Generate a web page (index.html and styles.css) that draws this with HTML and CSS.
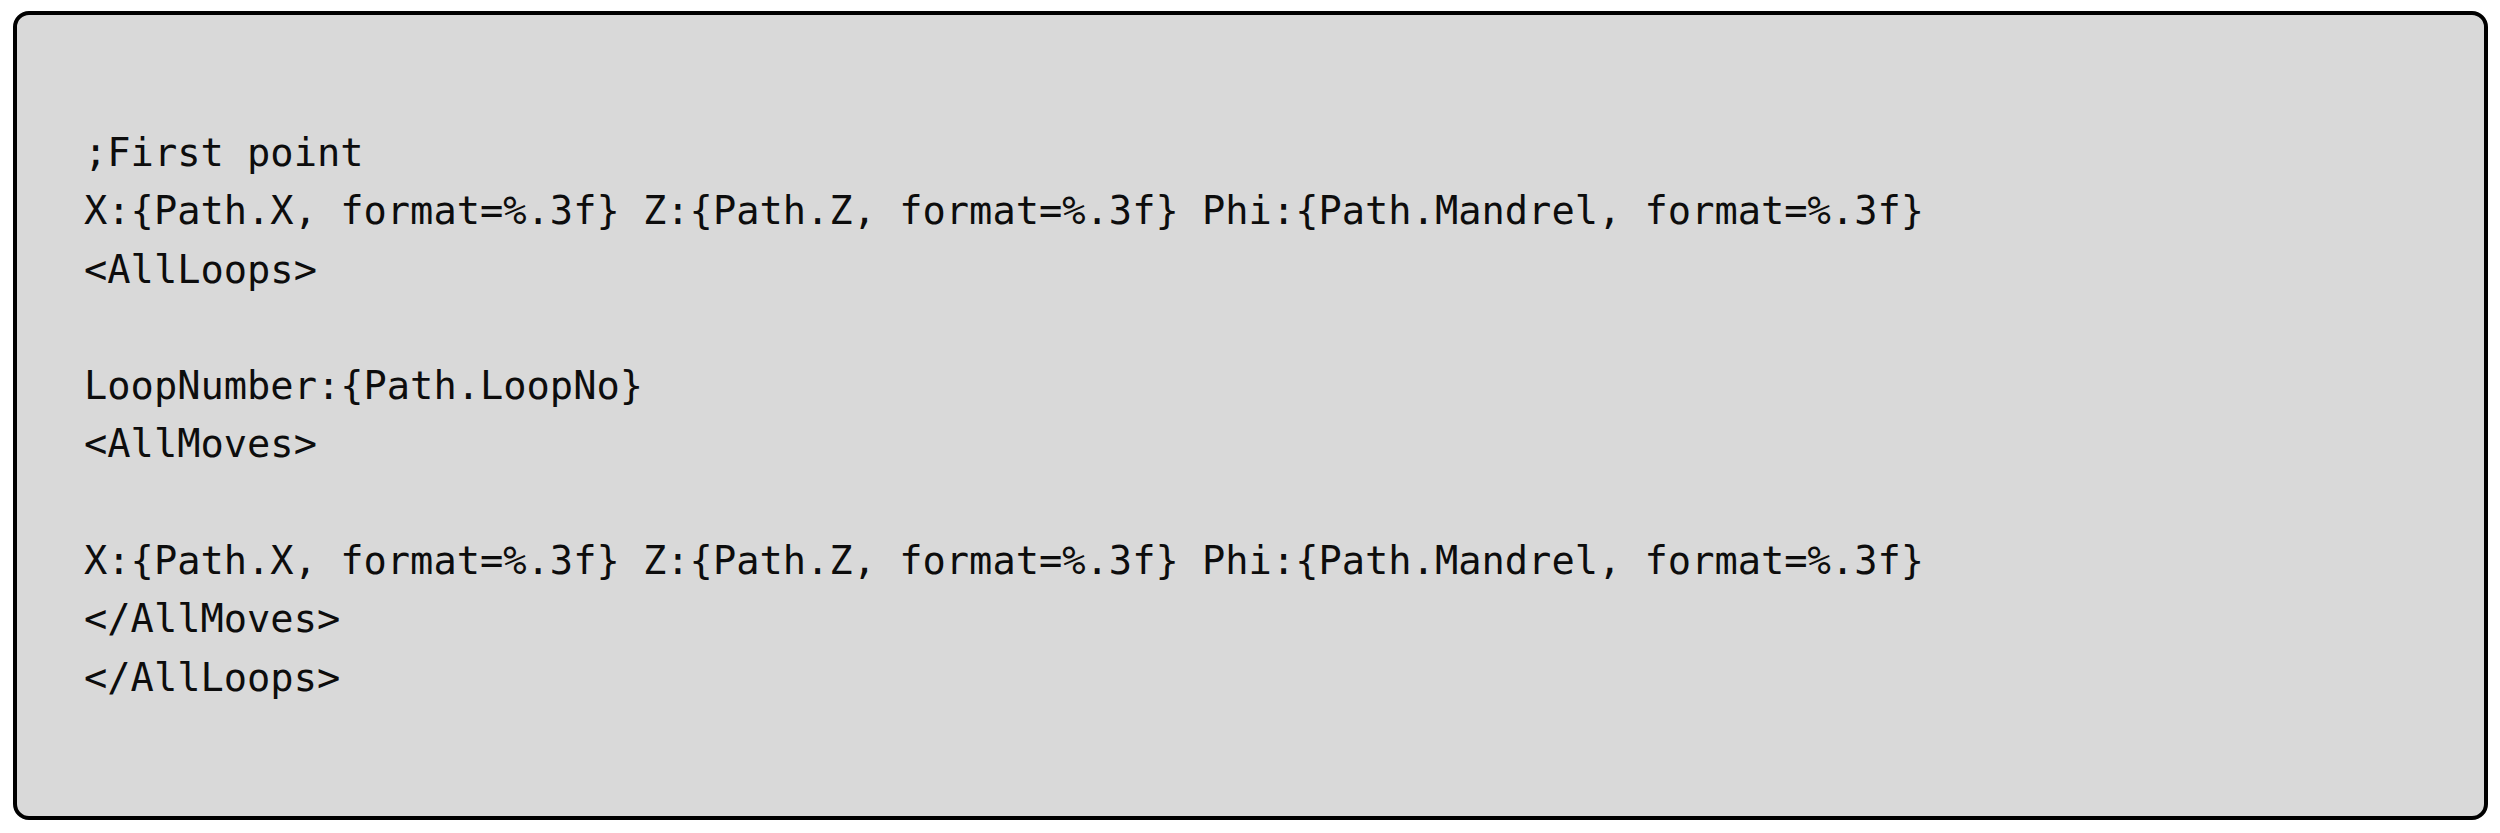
FILE: index.html
```html
<!DOCTYPE html>
<html>
<head>
<meta charset="utf-8">
<link rel="stylesheet" href="styles.css">
</head>
<body>
<div class="frame">
<pre class="code">;First point
X:{Path.X, format=%.3f} Z:{Path.Z, format=%.3f} Phi:{Path.Mandrel, format=%.3f}
&lt;AllLoops&gt;

LoopNumber:{Path.LoopNo}
&lt;AllMoves&gt;

X:{Path.X, format=%.3f} Z:{Path.Z, format=%.3f} Phi:{Path.Mandrel, format=%.3f}
&lt;/AllMoves&gt;
&lt;/AllLoops&gt;</pre>
</div>
</body>
</html>
```
FILE: styles.css
```css
html, body {
  margin: 0;
  padding: 0;
  background: #ffffff;
}
body {
  padding: 11px 12px 13px 13px;
}
.frame {
  box-sizing: border-box;
  height: 809px;
  border: 4.5px solid #000000;
  border-radius: 16px;
  background: #d9d9d9;
  padding: 109px 60px 0 67px;
}
.code {
  margin: 0;
  font-family: "DejaVu Sans Mono", "Liberation Mono", monospace;
  font-size: 38.7px;
  line-height: 58.3px;
  color: #0d0d0d;
  white-space: pre;
}
```
